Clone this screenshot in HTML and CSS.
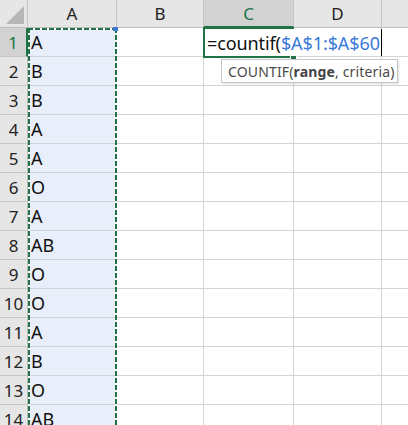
FILE: index.html
```html
<!DOCTYPE html>
<html>
<head>
<meta charset="utf-8">
<link rel="stylesheet" href="styles.css">
</head>
<body>
<div class="sheet">
  <div class="grid">
    <div class="corner"><svg class="tri" width="18" height="18" viewBox="0 0 18 18"><polygon points="18,0 18,18 0,18" fill="#b7b7b7"/></svg></div>
    <div class="colh">A</div>
    <div class="colh">B</div>
    <div class="colh active-col">C</div>
    <div class="colh">D</div>
    <div class="colh last"></div>

    <div class="rowh active-row">1</div><div class="cell sel">A</div><div class="cell"></div><div class="cell"></div><div class="cell"></div><div class="cell last"></div>
    <div class="rowh">2</div><div class="cell sel">B</div><div class="cell"></div><div class="cell"></div><div class="cell"></div><div class="cell last"></div>
    <div class="rowh">3</div><div class="cell sel">B</div><div class="cell"></div><div class="cell"></div><div class="cell"></div><div class="cell last"></div>
    <div class="rowh">4</div><div class="cell sel">A</div><div class="cell"></div><div class="cell"></div><div class="cell"></div><div class="cell last"></div>
    <div class="rowh">5</div><div class="cell sel">A</div><div class="cell"></div><div class="cell"></div><div class="cell"></div><div class="cell last"></div>
    <div class="rowh">6</div><div class="cell sel">O</div><div class="cell"></div><div class="cell"></div><div class="cell"></div><div class="cell last"></div>
    <div class="rowh">7</div><div class="cell sel">A</div><div class="cell"></div><div class="cell"></div><div class="cell"></div><div class="cell last"></div>
    <div class="rowh">8</div><div class="cell sel">AB</div><div class="cell"></div><div class="cell"></div><div class="cell"></div><div class="cell last"></div>
    <div class="rowh">9</div><div class="cell sel">O</div><div class="cell"></div><div class="cell"></div><div class="cell"></div><div class="cell last"></div>
    <div class="rowh">10</div><div class="cell sel">O</div><div class="cell"></div><div class="cell"></div><div class="cell"></div><div class="cell last"></div>
    <div class="rowh">11</div><div class="cell sel">A</div><div class="cell"></div><div class="cell"></div><div class="cell"></div><div class="cell last"></div>
    <div class="rowh">12</div><div class="cell sel">B</div><div class="cell"></div><div class="cell"></div><div class="cell"></div><div class="cell last"></div>
    <div class="rowh">13</div><div class="cell sel">O</div><div class="cell"></div><div class="cell"></div><div class="cell"></div><div class="cell last"></div>
    <div class="rowh">14</div><div class="cell sel">AB</div><div class="cell"></div><div class="cell"></div><div class="cell"></div><div class="cell last"></div>
  </div>

  <div class="ants"></div>
  <div class="refhandle"></div>
  <div class="activebox"></div>
  <div class="fillhandle"></div>
  <div class="editor"><span class="fx">=countif(</span><span class="ref">$A$1:$A$60</span></div>
  <div class="tip"><span>COUNTIF(</span><b>range</b><span>, criteria)</span></div>
</div>
</body>
</html>
```

FILE: styles.css
```css
html, body {
  margin: 0;
  padding: 0;
  background: #ffffff;
  overflow: hidden;
}

.sheet {
  position: relative;
  width: 408px;
  height: 425px;
  overflow: hidden;
  font-family: "Noto Sans", "Noto Sans CJK KR", sans-serif;
}

.grid {
  display: grid;
  grid-template-columns: 28px 89px 87px 90px 88px 1fr;
  grid-template-rows: 28px;
  grid-auto-rows: 29px;
}

.grid > div {
  box-sizing: border-box;
  border-right: 1px solid #d4d4d4;
  border-bottom: 1px solid #d4d4d4;
}

.corner {
  background: #e6e6e6;
  display: flex;
  align-items: flex-end;
  justify-content: flex-end;
  border-right-color: #c6c6c6 !important;
  border-bottom-color: #bdbdbd !important;
}

.tri {
  display: block;
  margin: 0 3px 3px 0;
}

.colh {
  background: #e6e6e6;
  border-bottom-color: #bdbdbd !important;
  border-right-color: #c6c6c6 !important;
  display: flex;
  align-items: center;
  justify-content: center;
  font-size: 17px;
  color: #222;
}

.colh.active-col {
  background: #d2d2d2;
  color: #217346;
  border-bottom: 2px solid #217346 !important;
}

.rowh {
  background: #e6e6e6;
  border-right-color: #bdbdbd !important;
  border-bottom-color: #c6c6c6 !important;
  display: flex;
  align-items: center;
  justify-content: center;
  font-size: 17px;
  color: #222;
}

.rowh.active-row {
  background: #d2d2d2;
  color: #217346;
  border-right: 2px solid #217346 !important;
}

.cell {
  background: #ffffff;
  font-size: 18px;
  color: #111;
  display: flex;
  align-items: center;
  padding-left: 3px;
}

.cell.sel {
  background: #e8effa;
  border-bottom-color: #ced4de !important;
}

.cell.last {
  border-right: none !important;
}

.colh.last {
  border-right: none !important;
}

.ants {
  position: absolute;
  left: 28px;
  top: 28px;
  width: 89px;
  height: 420px;
  background:
    repeating-linear-gradient(to bottom, #217346 0 5px, #ffffff 5px 7px) left top / 2px 100% no-repeat,
    repeating-linear-gradient(to bottom, #217346 0 5px, #ffffff 5px 7px) right top / 2px 100% no-repeat,
    repeating-linear-gradient(to right, #217346 0 5px, #ffffff 5px 7px) left top / 100% 2px no-repeat;
}

.refhandle {
  position: absolute;
  left: 113px;
  top: 27px;
  width: 5px;
  height: 4px;
  background: #3c78d8;
}

.activebox {
  position: absolute;
  left: 203px;
  top: 27px;
  width: 91px;
  height: 31px;
  box-sizing: border-box;
  border: 2px solid #217346;
}

.fillhandle {
  position: absolute;
  left: 290px;
  top: 55px;
  width: 5px;
  height: 5px;
  background: #217346;
  border: 1px solid #ffffff;
  box-sizing: content-box;
}

.editor {
  position: absolute;
  left: 205px;
  top: 29px;
  width: 177px;
  height: 27px;
  background: #ffffff;
  border-right: 1px solid #000000;
  display: flex;
  align-items: center;
  padding-left: 2px;
  box-sizing: border-box;
  font-size: 18px;
  letter-spacing: -0.1px;
  white-space: nowrap;
}

.fx {
  color: #111;
}

.ref {
  color: #3b7ad9;
}

.tip {
  position: absolute;
  left: 221px;
  top: 59px;
  width: 177px;
  height: 24px;
  box-sizing: border-box;
  background: #ffffff;
  border: 1px solid #c6c6c6;
  box-shadow: 1px 1px 2px rgba(0,0,0,0.12);
  display: flex;
  align-items: center;
  padding-left: 6px;
  font-size: 14px;
  letter-spacing: 0.15px;
  color: #4a4a4a;
  white-space: nowrap;
}

.tip b {
  font-weight: bold;
  color: #444;
}
```
